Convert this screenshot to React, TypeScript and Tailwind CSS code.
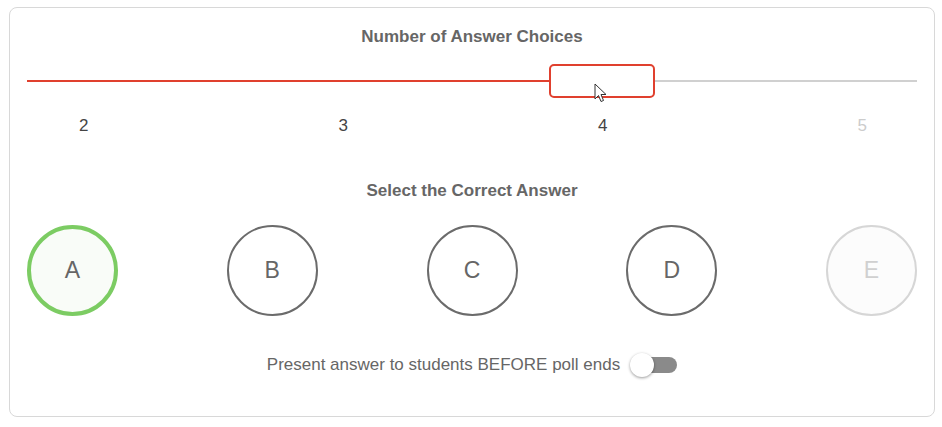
import { useState } from 'react'

const labels = [
  { n: 2, on: true },
  { n: 3, on: true },
  { n: 4, on: true },
  { n: 5, on: false },
]

const choices = ['A', 'B', 'C', 'D', 'E']

function Cursor() {
  return (
    <svg width="14" height="20" viewBox="0 0 14 20" className="absolute left-[567px] top-[19px]">
      <path d="M1 1 L1 16 L4.5 12.5 L7 18.5 L9.5 17.5 L7 11.5 L12 11.5 Z" fill="#fff" stroke="#333" strokeWidth="1" strokeLinejoin="round" />
    </svg>
  )
}

export default function App() {
  const [correct, setCorrect] = useState('A')
  const [early, setEarly] = useState(false)

  return (
    <div className="pl-[9px] pt-[7px] font-['Liberation_Sans',Arial,sans-serif]">
      <div className="w-[926px] h-[410px] rounded-lg border border-[#d8d8d8] bg-white px-[17px] pt-[19px] flex flex-col">
        <h2 className="text-center text-[17px] leading-[20px] font-bold text-[#666]">Number of Answer Choices</h2>

        <div className="relative mt-[17px] h-[34px]">
          <div className="absolute left-0 right-0 top-[16px] h-[2px] bg-[#d0d0d0]" />
          <div className="absolute left-0 w-[522px] top-[16px] h-[2px] bg-[#e0402e]" />
          <div className="absolute left-[522px] top-0 w-[106px] h-[34px] rounded-[5px] border-2 border-[#e0402e] bg-white" />
          <Cursor />
        </div>

        <div className="mt-[18px] flex justify-between pl-[52px] pr-[50px] text-[17px] leading-[20px]">
          {labels.map((l) => (
            <span key={l.n} className={l.on ? 'text-[#444]' : 'text-[#ccc]'}>{l.n}</span>
          ))}
        </div>

        <h2 className="mt-[45px] text-center text-[17px] leading-[20px] font-bold text-[#666]">Select the Correct Answer</h2>

        <div className="mt-[24px] flex justify-between">
          {choices.map((c) => {
            const disabled = c === 'E'
            const selected = c === correct
            return (
              <button
                key={c}
                onClick={() => !disabled && setCorrect(c)}
                className={
                  selected
                    ? 'w-[91px] h-[91px] rounded-full border-4 border-[#7ccc63] bg-[#f9fcf8] text-[23px] text-[#666] flex items-center justify-center'
                    : disabled
                      ? 'w-[91px] h-[91px] rounded-full border-2 border-[#d6d6d6] bg-[#fcfcfc] text-[23px] text-[#d0d0d0] flex items-center justify-center'
                      : 'w-[91px] h-[91px] rounded-full border-2 border-[#6b6b6b] bg-white text-[23px] text-[#666] flex items-center justify-center'
                }
              >
                {c}
              </button>
            )
          })}
        </div>

        <div className="mt-[37px] flex items-center justify-center gap-[10px]">
          <span className="text-[17px] leading-[20px] text-[#666]">Present answer to students BEFORE poll ends</span>
          <button onClick={() => setEarly(!early)} className="relative w-[47px] h-[24px]">
            <span className="absolute left-[2px] top-[4px] w-[45px] h-[16px] rounded-full bg-[#8a8a8a]" />
            <span className="absolute left-0 top-0 w-[24px] h-[24px] rounded-full bg-white shadow-[0_1px_3px_rgba(0,0,0,0.4)]" />
          </button>
        </div>
      </div>
    </div>
  )
}
